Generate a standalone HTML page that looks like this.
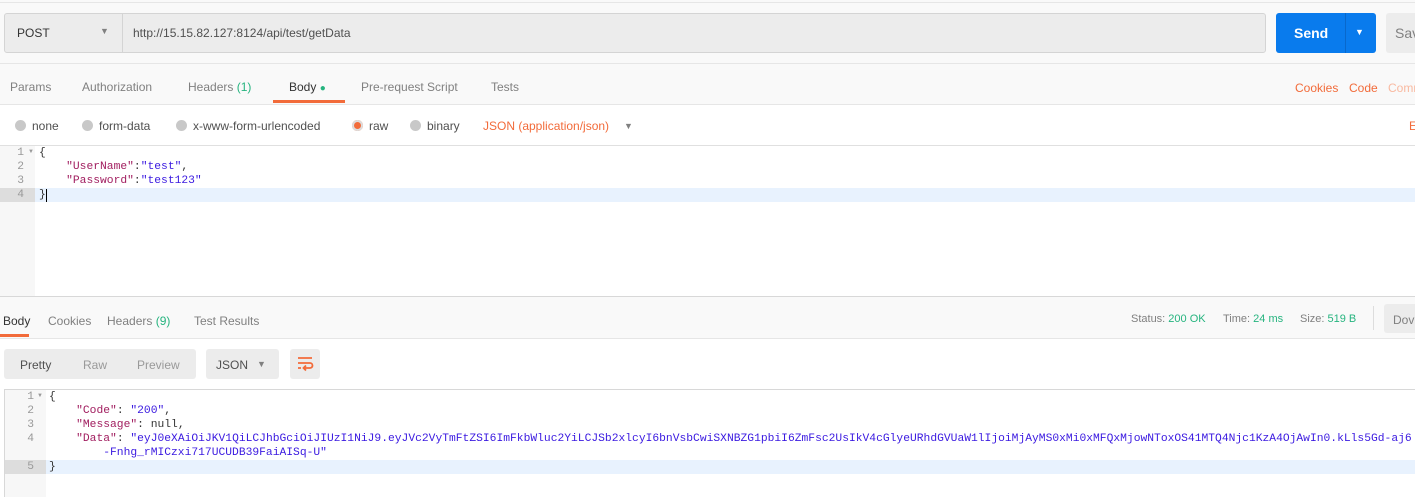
<!DOCTYPE html>
<html><head><meta charset="utf-8"><style>
*{margin:0;padding:0;box-sizing:border-box}
body{width:1415px;height:497px;overflow:hidden;background:#fff;font-family:"Liberation Sans",sans-serif;font-size:12px;color:#808080;position:relative}
.a{position:absolute}
.mono{font-family:"Liberation Mono",monospace;font-size:11.3px;line-height:14px;white-space:pre}
.k{color:#a11d5f}.s{color:#3a19e0}.p{color:#333}
.ln{color:#999;text-align:right;width:24px}
.rad{display:inline-block;width:11px;height:11px;border-radius:50%;background:#c8c8c8;vertical-align:-1px;margin-right:6px}
</style></head><body>
<div class="a" style="left:0;top:0;width:1415px;height:145px;background:#f9f9f9"></div>
<div class="a" style="left:0;top:2px;width:1415px;height:1px;background:#e6e6e6"></div>
<div class="a" style="left:4px;top:13px;width:1262px;height:40px;background:#ececec;border:1px solid #d4d4d4;border-radius:3px"></div>
<div class="a" style="left:122px;top:14px;width:1px;height:38px;background:#d4d4d4"></div>
<div class="a" style="left:17px;top:26px;color:#333;font-size:12px">POST</div>
<div class="a" style="left:100px;top:26px;color:#808080;font-size:9px">▼</div>
<div class="a" style="left:133px;top:26px;color:#505050;font-size:12px">http://15.15.82.127:8124/api/test/getData</div>
<div class="a" style="left:1276px;top:13px;width:100px;height:40px;background:#097bed;border-radius:3px"></div>
<div class="a" style="left:1345px;top:13px;width:1px;height:40px;background:#0868cc"></div>
<div class="a" style="left:1294px;top:25px;color:#fff;font-size:14px;font-weight:bold">Send</div>
<div class="a" style="left:1355px;top:27px;color:#fff;font-size:9px">▼</div>
<div class="a" style="left:1386px;top:13px;width:40px;height:40px;background:#ececec;border-radius:3px"></div>
<div class="a" style="left:1395px;top:25px;color:#808080;font-size:14px">Sav</div>
<div class="a" style="left:0;top:63px;width:1415px;height:1px;background:#e6e6e6"></div>
<div class="a" style="top:80px;left:10px">Params</div>
<div class="a" style="top:80px;left:82px">Authorization</div>
<div class="a" style="top:80px;left:188px">Headers <span style="color:#26b47f">(1)</span></div>
<div class="a" style="top:80px;left:289px;color:#333">Body <span style="color:#26b47f;font-size:10px">●</span></div>
<div class="a" style="top:80px;left:361px">Pre-request Script</div>
<div class="a" style="top:80px;left:491px">Tests</div>
<div class="a" style="top:100px;left:273px;width:72px;height:3px;background:#f26b3a"></div>
<div class="a" style="top:81px;left:1295px;color:#f26b3a">Cookies</div>
<div class="a" style="top:81px;left:1349px;color:#f26b3a">Code</div>
<div class="a" style="top:81px;left:1388px;color:#f9b9a0">Comm</div>
<div class="a" style="left:0;top:104px;width:1415px;height:1px;background:#e6e6e6"></div>
<div class="a" style="left:0;top:105px;width:1415px;height:40px;background:#fff"></div>
<div class="a" style="top:119px;left:15px;color:#505050"><span class="rad"></span>none</div>
<div class="a" style="top:119px;left:82px;color:#505050"><span class="rad"></span>form-data</div>
<div class="a" style="top:119px;left:176px;color:#505050"><span class="rad"></span>x-www-form-urlencoded</div>
<div class="a" style="top:119px;left:352px;color:#505050"><span class="rad" style="background:#f26b3a;box-shadow:inset 0 0 0 2px #ddd"></span>raw</div>
<div class="a" style="top:119px;left:410px;color:#505050"><span class="rad"></span>binary</div>
<div class="a" style="top:119px;left:483px;color:#f26b3a">JSON (application/json)</div>
<div class="a" style="top:121px;left:624px;color:#808080;font-size:9px">▼</div>
<div class="a" style="top:119px;left:1409px;color:#f26b3a">E</div>
<div class="a" style="left:0;top:145px;width:1415px;height:1px;background:#e0e0e0"></div>
<div class="a" style="left:0;top:146px;width:35px;height:150px;background:#f7f7f7"></div>
<div class="a" style="left:0;top:188px;width:35px;height:14px;background:#ddd"></div>
<div class="a" style="left:35px;top:188px;width:1380px;height:14px;background:#e8f2fe"></div>
<div class="a mono ln" style="left:0;top:146px">1
2
3
4</div>
<div class="a" style="left:28px;top:149px;font-size:6px;color:#999">▼</div>
<div class="a mono p" style="left:39px;top:146px">{
    <span class="k">"UserName"</span>:<span class="s">"test"</span>,
    <span class="k">"Password"</span>:<span class="s">"test123"</span>
}</div>
<div class="a" style="left:46px;top:189px;width:1px;height:13px;background:#000"></div>
<div class="a" style="left:0;top:296px;width:1415px;height:1px;background:#d8d8d8"></div>
<div class="a" style="left:0;top:297px;width:1415px;height:41px;background:#f9f9f9"></div>
<div class="a" style="top:314px;left:3px;color:#333">Body</div>
<div class="a" style="top:314px;left:48px">Cookies</div>
<div class="a" style="top:314px;left:107px">Headers <span style="color:#26b47f">(9)</span></div>
<div class="a" style="top:314px;left:194px">Test Results</div>
<div class="a" style="top:334px;left:0;width:29px;height:3px;background:#f26b3a"></div>
<div class="a" style="top:313px;left:1131px;font-size:11px">Status: <span style="color:#26b47f">200 OK</span></div>
<div class="a" style="top:313px;left:1223px;font-size:11px">Time: <span style="color:#26b47f">24 ms</span></div>
<div class="a" style="top:313px;left:1300px;font-size:11px">Size: <span style="color:#26b47f">519 B</span></div>
<div class="a" style="top:306px;left:1373px;width:1px;height:24px;background:#ddd"></div>
<div class="a" style="top:304px;left:1384px;width:40px;height:29px;background:#ececec;border-radius:3px"></div>
<div class="a" style="top:313px;left:1393px">Dov</div>
<div class="a" style="left:0;top:338px;width:1415px;height:1px;background:#e6e6e6"></div>
<div class="a" style="top:349px;left:4px;width:192px;height:30px;background:#ececec;border-radius:3px"></div>
<div class="a" style="top:358px;left:20px;color:#505050">Pretty</div>
<div class="a" style="top:358px;left:83px;color:#999">Raw</div>
<div class="a" style="top:358px;left:137px;color:#999">Preview</div>
<div class="a" style="top:349px;left:206px;width:73px;height:30px;background:#ececec;border-radius:3px"></div>
<div class="a" style="top:358px;left:216px;color:#505050">JSON</div>
<div class="a" style="top:359px;left:257px;font-size:9px">▼</div>
<div class="a" style="top:349px;left:290px;width:30px;height:30px;background:#ececec;border-radius:3px"></div>
<svg class="a" style="top:355px;left:296px" width="18" height="18" viewBox="0 0 18 18" fill="none" stroke="#f26b3a" stroke-width="1.8"><path d="M2 3h14M2 8h12a2.5 2.5 0 0 1 0 5H8M10 10.5l-2.5 2.5 2.5 2.5M2 13h3"/></svg>
<div class="a" style="left:4px;top:389px;width:1411px;height:1px;background:#d8d8d8"></div>
<div class="a" style="left:4px;top:389px;width:1px;height:108px;background:#d8d8d8"></div>
<div class="a" style="left:5px;top:390px;width:41px;height:107px;background:#f7f7f7"></div>
<div class="a" style="left:5px;top:460px;width:41px;height:14px;background:#ddd"></div>
<div class="a" style="left:46px;top:460px;width:1369px;height:14px;background:#e8f2fe"></div>
<div class="a mono ln" style="left:10px;top:390px;width:24px">1
2
3
4

5</div>
<div class="a" style="left:37px;top:393px;font-size:6px;color:#999">▼</div>
<div class="a mono p" style="left:49px;top:390px">{
    <span class="k">"Code"</span>: <span class="s">"200"</span>,
    <span class="k">"Message"</span>: null,
    <span class="k">"Data"</span>: <span class="s">"eyJ0eXAiOiJKV1QiLCJhbGciOiJIUzI1NiJ9.eyJVc2VyTmFtZSI6ImFkbWluc2YiLCJSb2xlcyI6bnVsbCwiSXNBZG1pbiI6ZmFsc2UsIkV4cGlyeURhdGVUaW1lIjoiMjAyMS0xMi0xMFQxMjowNToxOS41MTQ4Njc1KzA4OjAwIn0.kLls5Gd-aj6</span>
<span class="s">        -Fnhg_rMICzxi717UCUDB39FaiAISq-U"</span>
}</div>
</body></html>
